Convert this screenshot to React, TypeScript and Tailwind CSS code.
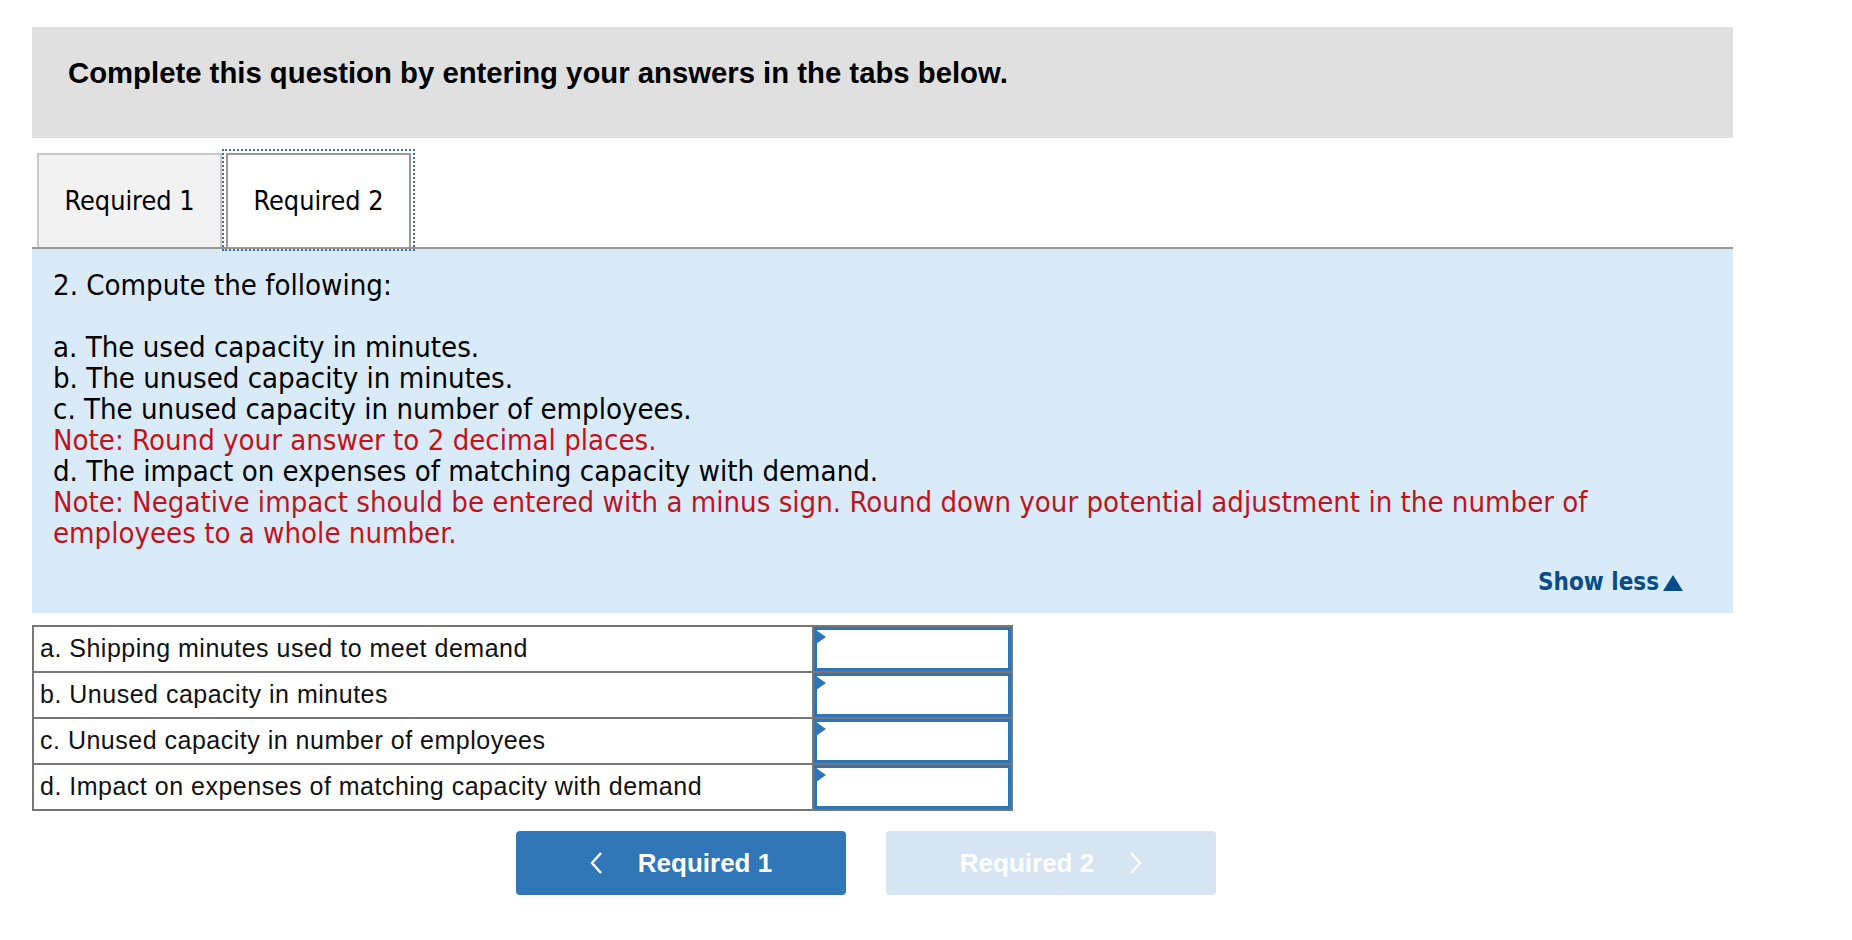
import React from 'react'

const rows = [
  'a. Shipping minutes used to meet demand',
  'b. Unused capacity in minutes',
  'c. Unused capacity in number of employees',
  'd. Impact on expenses of matching capacity with demand'
]

function Chevron({ dir }: { dir: 'left' | 'right' }) {
  return (
    <svg width="14" height="22" viewBox="0 0 14 22" fill="none" className="shrink-0">
      <polyline
        points={dir === 'left' ? '11,1 2,11 11,21' : '3,1 12,11 3,21'}
        stroke="white"
        strokeWidth="2.4"
        strokeLinejoin="miter"
      />
    </svg>
  )
}

export default function App() {
  return (
    <div className="min-h-[940px] bg-white pl-[32px] pt-[27px]">
      <div className="w-[1701px]">
        {/* Instructions header */}
        <div className="h-[111px] bg-[#e0e0e0] pl-[36px] pt-[29px]">
          <h2 className="font-['Liberation_Sans',Arial,sans-serif] text-[29.3px] font-bold leading-[34px] text-black">
            Complete this question by entering your answers in the tabs below.
          </h2>
        </div>

        {/* Tabs */}
        <div className="mt-[15px] flex h-[96px] items-stretch border-b-2 border-[#999] pl-[5px] font-['DejaVu_Sans_Condensed','DejaVu_Sans',sans-serif] text-[26.8px] text-black">
          <button className="flex w-[185px] items-center justify-center border-2 border-b-0 border-[#c8c8c8] bg-[#f2f2f2]">
            Required 1
          </button>
          <button className="ml-[4px] flex w-[185px] items-center justify-center border-2 border-b-0 border-[#999] bg-white outline-2 outline-offset-2 outline-dotted outline-[#2f75b5]">
            Required 2
          </button>
        </div>

        {/* Question panel */}
        <div className="bg-[#d9ebf9] pl-[21px] pr-[50px] pt-[21px] pb-[15px] font-['DejaVu_Sans_Condensed','DejaVu_Sans',sans-serif] text-[29.1px] leading-[31px] text-black">
          <p>2. Compute the following:</p>
          <p className="mt-[31px]">a. The used capacity in minutes.</p>
          <p>b. The unused capacity in minutes.</p>
          <p>c. The unused capacity in number of employees.</p>
          <p className="text-[#c0141c]">Note: Round your answer to 2 decimal places.</p>
          <p>d. The impact on expenses of matching capacity with demand.</p>
          <p className="text-[#c0141c]">
            Note: Negative impact should be entered with a minus sign. Round down your potential adjustment in the number of employees to a whole number.
          </p>
          <div className="mt-[18px] flex justify-end">
            <span className="flex items-center text-[24px] font-bold text-[#084c89]">
              Show less
              <svg width="20" height="16" viewBox="0 0 20 16" className="ml-[4px]">
                <polygon points="10,0 20,16 0,16" fill="#084c89" />
              </svg>
            </span>
          </div>
        </div>

        {/* Answer table */}
        <div className="mt-[12px] w-[981px] border-2 border-[#777] font-['Liberation_Sans',Arial,sans-serif] text-[25px] tracking-[0.5px] text-[#111]">
          {rows.map((label, i) => (
            <div key={label} className={`flex h-[44px] ${i < rows.length - 1 ? 'box-content border-b-2 border-[#777]' : ''}`}>
              <div className="flex flex-1 items-center border-r-2 border-[#777] pl-[6px]">{label}</div>
              <div className="relative w-[197px] border-[3px] border-[#2f75b5] bg-white">
                <svg width="10" height="14" viewBox="0 0 10 14" className="absolute -left-px top-0">
                  <polygon points="0,0 10,7 0,14" fill="#2f75b5" />
                </svg>
              </div>
            </div>
          ))}
        </div>

        {/* Navigation buttons */}
        <div className="ml-[484px] mt-[20px] flex gap-[40px] font-['Liberation_Sans',Arial,sans-serif] text-[26px] font-bold text-white">
          <button className="flex h-[64px] w-[330px] items-center justify-center gap-[34px] rounded-[4px] bg-[#3176b7]">
            <Chevron dir="left" />
            <span>Required 1</span>
          </button>
          <button className="flex h-[64px] w-[330px] items-center justify-center gap-[34px] rounded-[4px] bg-[#d7e5f2]">
            <span>Required 2</span>
            <Chevron dir="right" />
          </button>
        </div>
      </div>
    </div>
  )
}
